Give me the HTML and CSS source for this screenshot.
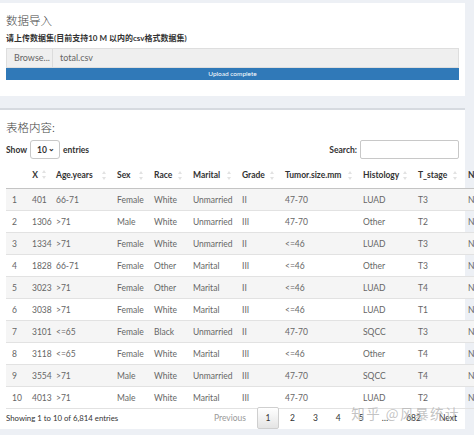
FILE: index.html
```html
<!DOCTYPE html>
<html lang="zh-CN">
<head>
    <meta charset="UTF-8">
    <meta name="viewport" content="width=device-width, initial-scale=1.0">
    <title>数据导入</title>
    <link rel="stylesheet" href="styles.css">
</head>
<body>
    <!-- 数据导入 -->
    <div class="box box-upload">
        <h3 class="box-title">数据导入</h3>
        <label class="upload-label">请上传数据集(目前支持10 M 以内的csv格式数据集)</label>
        <div class="file-group">
            <span class="file-btn">Browse...</span>
            <span class="file-name">total.csv</span>
        </div>
        <div class="progress">Upload complete</div>
    </div>

    <!-- 表格内容 -->
    <div class="box box-table">
        <h3 class="box-title">表格内容:</h3>
        <div class="dt-controls">
            <div class="dt-length">
                Show
                <span class="dt-select">10 <span class="caret">&#8964;</span></span>
                entries
            </div>
            <div class="dt-search">
                Search:
                <span class="dt-input"></span>
            </div>
        </div>

        <table class="dt-table">
            <colgroup>
                <col style="width:20px"><col style="width:24px"><col style="width:61px">
                <col style="width:37px"><col style="width:39px"><col style="width:49px">
                <col style="width:43px"><col style="width:78px"><col style="width:55px">
                <col style="width:50px"><col style="width:40px">
            </colgroup>
            <thead>
                <tr>
                    <th></th>
                    <th class="num">X<i class="sort"></i></th>
                    <th>Age.years<i class="sort"></i></th>
                    <th>Sex<i class="sort"></i></th>
                    <th>Race<i class="sort"></i></th>
                    <th>Marital<i class="sort"></i></th>
                    <th>Grade<i class="sort"></i></th>
                    <th>Tumor.size.mm<i class="sort"></i></th>
                    <th>Histology<i class="sort"></i></th>
                    <th>T_stage<i class="sort"></i></th>
                    <th>N</th>
                </tr>
            </thead>
            <tbody id="rows"></tbody>
        </table>

        <div class="dt-footer">
            <div class="dt-info">Showing 1 to 10 of 6,814 entries</div>
            <div class="dt-paging">
                <span class="page disabled">Previous</span>
                <span class="page current">1</span>
                <span class="page">2</span>
                <span class="page">3</span>
                <span class="page">4</span>
                <span class="page">5</span>
                <span class="page">…</span>
                <span class="page">682</span>
                <span class="page last">Next</span>
            </div>
            <div class="watermark">知乎 @风暴统计</div>
        </div>
    </div>

    <script>
        // 表格数据
        const dados = [
            ["1", "401", "66-71", "Female", "White", "Unmarried", "II", "47-70", "LUAD", "T3", "N"],
            ["2", "1306", ">71", "Male", "White", "Unmarried", "III", "47-70", "Other", "T2", "N"],
            ["3", "1334", ">71", "Female", "White", "Unmarried", "II", "<=46", "LUAD", "T3", "N"],
            ["4", "1828", "66-71", "Female", "Other", "Marital", "III", "<=46", "Other", "T3", "N"],
            ["5", "3023", ">71", "Female", "Other", "Marital", "II", "<=46", "LUAD", "T4", "N"],
            ["6", "3038", ">71", "Female", "White", "Marital", "III", "<=46", "LUAD", "T1", "N"],
            ["7", "3101", "<=65", "Female", "Black", "Unmarried", "II", "47-70", "SQCC", "T3", "N"],
            ["8", "3118", "<=65", "Female", "White", "Marital", "III", "<=46", "Other", "T4", "N"],
            ["9", "3554", ">71", "Male", "White", "Unmarried", "III", "47-70", "SQCC", "T4", "N"],
            ["10", "4013", ">71", "Male", "White", "Marital", "III", "47-70", "LUAD", "T2", "N"]
        ];

        const tbody = document.getElementById("rows");
        dados.forEach(linha => {
            const tr = document.createElement("tr");
            linha.forEach((valor, i) => {
                const td = document.createElement("td");
                td.textContent = valor;
                if (i === 1) td.className = "num";
                tr.appendChild(td);
            });
            tbody.appendChild(tr);
        });
    </script>
</body>
</html>
```

FILE: styles.css
```css
body {
    margin: 0;
    padding: 3px 0 0;
    background-color: #edf0f5;
    font-family: Lato, "Noto Sans CJK SC", sans-serif;
    font-size: 8.5px;
    color: #555;
    height: 435px;
    box-sizing: border-box;
    overflow: hidden;
}

.box {
    width: 465px;
    background: #fff;
    box-sizing: border-box;
    padding: 0 6px;
}

.box-title {
    margin: 0;
    font-family: "Noto Sans CJK SC", sans-serif;
    font-weight: 300;
    color: #444;
}

/* 数据导入 */
.box-upload {
    height: 93px;
    padding-top: 10px;
}

.box-upload .box-title {
    font-size: 11.5px;
    line-height: 15px;
}

.upload-label {
    display: block;
    margin-top: 4px;
    font-weight: bold;
    font-size: 8px;
    line-height: 12px;
    color: #333;
}

.file-group {
    display: flex;
    margin-top: 4px;
    height: 20px;
    background: #efefef;
    border: 1px solid #dedede;
    box-sizing: border-box;
    font-size: 9px;
    color: #666;
    line-height: 18px;
}

.file-btn {
    width: 46px;
    padding-left: 7px;
    box-sizing: border-box;
    border-right: 1px solid #dcdcdc;
}

.file-name {
    padding-left: 7px;
}

.progress {
    height: 12px;
    background: #3079b8;
    color: #fff;
    text-align: center;
    font-size: 6.5px;
    line-height: 12px;
}

/* 表格内容 */
.box-table {
    position: relative;
    margin-top: 12px;
    border-top: 2px solid #d6dae0;
    height: 321px;
    padding-top: 10px;
}

.box-table .box-title {
    font-size: 11.5px;
    line-height: 15px;
}

.dt-controls {
    display: flex;
    justify-content: space-between;
    align-items: center;
    margin-top: 5px;
    font-weight: bold;
    color: #333;
}

.dt-length,
.dt-search {
    display: flex;
    align-items: center;
    gap: 3px;
}

.dt-select {
    display: inline-flex;
    justify-content: space-between;
    align-items: center;
    width: 30px;
    height: 19px;
    padding: 0 4px 0 6px;
    box-sizing: border-box;
    border: 1px solid #c8c8c8;
    border-radius: 3px;
    font-weight: bold;
}

.caret {
    font-size: 8px;
    line-height: 6px;
    margin-top: -3px;
}

.dt-input {
    width: 99px;
    height: 19px;
    box-sizing: border-box;
    border: 1px solid #c8c8c8;
    border-radius: 2px;
}

.dt-table {
    table-layout: fixed;
    width: 496px;
    border-collapse: collapse;
    margin-top: 2px;
}

.dt-table th,
.dt-table td {
    padding: 0 6px;
    text-align: left;
    white-space: nowrap;
}

.dt-table th {
    height: 27px;
    font-weight: bold;
    color: #333;
    border-bottom: 1px solid #c4c4c4;
}

.dt-table td {
    height: 21px;
    border-bottom: 1px solid #e2e2e2;
    color: #666;
}

.dt-table tbody tr:nth-child(odd) {
    background-color: #f5f5f5;
}

.dt-table .num {
    text-align: right;
}

.sort {
    float: right;
    width: 4px;
    height: 9px;
    margin-right: -1px;
    position: relative;
    top: 1px;
}

.sort::before,
.sort::after {
    content: "";
    position: absolute;
    left: 0;
    border-left: 2px solid transparent;
    border-right: 2px solid transparent;
}

.sort::before {
    top: 0;
    border-bottom: 3px solid #e2e2e2;
}

.sort::after {
    bottom: 0;
    border-top: 3px solid #e2e2e2;
}

.num .sort {
    float: none;
    display: inline-block;
    margin-left: 4px;
    margin-right: -2px;
}

.dt-footer {
    display: flex;
    justify-content: space-between;
    align-items: center;
    margin-top: -2px;
    height: 21px;
}

.dt-info {
    color: #333;
    font-size: 7.8px;
}

.dt-paging {
    display: flex;
    align-items: center;
    color: #333;
}

.page {
    padding: 0 9px;
    line-height: 20px;
}

.page.disabled {
    color: #999;
}

.page.current {
    width: 22px;
    padding: 0;
    box-sizing: border-box;
    text-align: center;
    border: 1px solid #cfcfcf;
    border-radius: 2px;
    background: linear-gradient(#fff, #e4e4e4);
    margin: 0 2px;
}

.page.last {
    padding-right: 2px;
}

.watermark {
    position: absolute;
    right: 5px;
    bottom: 6px;
    font-family: "Noto Sans CJK SC", sans-serif;
    font-size: 13.5px;
    color: rgba(185, 185, 185, 0.85);
    letter-spacing: 1.5px;
}
```
